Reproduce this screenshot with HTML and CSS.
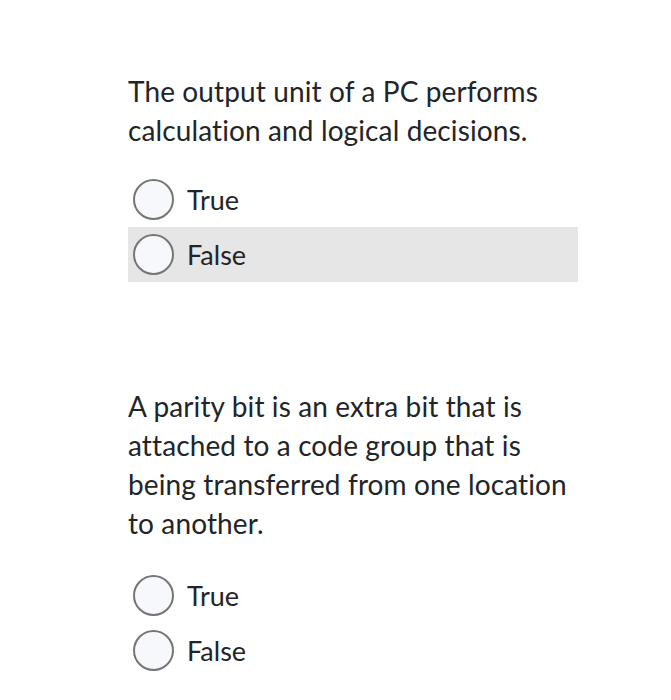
FILE: index.html
```html
<!DOCTYPE html>
<html>
<head>
<meta charset="utf-8">
<link rel="stylesheet" href="styles.css">
</head>
<body>
<div class="page">
  <div class="question">
    <p class="prompt">The output unit of a PC performs calculation and logical decisions.</p>
    <div class="options">
      <div class="option"><span class="radio"></span><span class="label">True</span></div>
      <div class="option hover"><span class="radio"></span><span class="label">False</span></div>
    </div>
  </div>
  <div class="question second">
    <p class="prompt">A parity bit is an extra bit that is attached to a code group that is being transferred from one location to another.</p>
    <div class="options">
      <div class="option"><span class="radio"></span><span class="label">True</span></div>
      <div class="option"><span class="radio"></span><span class="label">False</span></div>
    </div>
  </div>
</div>
</body>
</html>
```
FILE: styles.css
```css
html, body {
  margin: 0;
  padding: 0;
  background: #ffffff;
}
body {
  font-family: Lato, "Liberation Sans", sans-serif;
  color: #222528;
  font-variant-ligatures: none;
}
.page {
  width: 450px;
  padding: 72px 0 0 128px;
}
.prompt {
  margin: 0;
  font-size: 28px;
  line-height: 39px;
  letter-spacing: 0.12px;
}
.options {
  margin-top: 22px;
}
.second .options {
  margin-top: 25px;
}
.option {
  height: 55px;
  display: flex;
  align-items: center;
  gap: 13px;
  padding-left: 5px;
}
.option.hover {
  background: #e6e6e6;
}
.radio {
  width: 37px;
  height: 37px;
  border: 2px solid #757575;
  border-radius: 50%;
  background: #f6f8fc;
  flex: none;
}
.label {
  font-size: 27px;
}
.second {
  margin-top: 105px;
}
```
